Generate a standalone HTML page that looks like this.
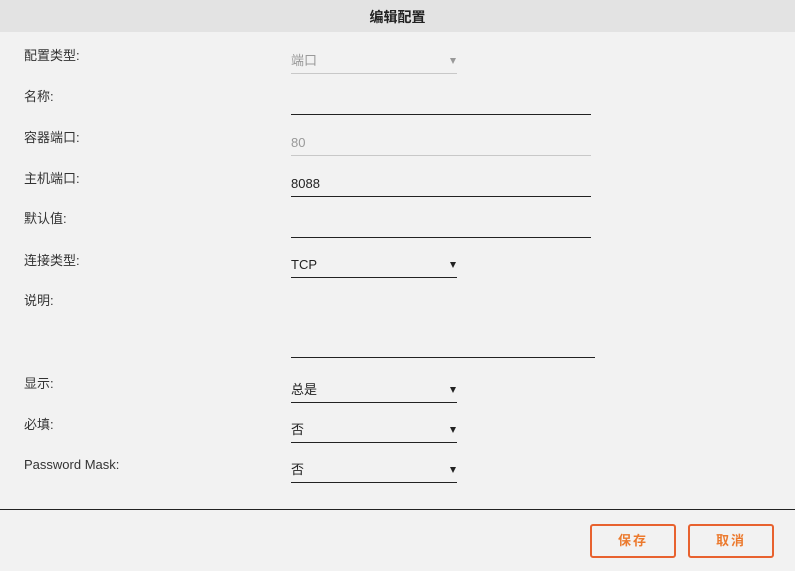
<!DOCTYPE html>
<html><head><meta charset="utf-8"><style>
*{margin:0;padding:0;box-sizing:border-box}
body{width:795px;height:571px;background:#f2f2f2;font-family:"Liberation Sans","Noto Sans CJK SC",sans-serif;position:relative;overflow:hidden;color:#333}
.hd{position:absolute;left:0;top:0;width:795px;height:32px;background:#e3e3e3;text-align:center;line-height:34px;font-size:14px;font-weight:bold;color:#222}
.l{position:absolute;left:24px;font-size:13px;color:#333;line-height:16px}
.f{position:absolute;left:291px;border-bottom:1px solid #222;height:20px;font-size:13px;line-height:14px;color:#222}
.g{border-bottom-color:#c8c8c8;color:#999}
.a{position:absolute;right:1px;top:4px;width:6px;height:6px}
.a path{fill:#222}
.g .a path{fill:#999}
.line{position:absolute;left:0;top:509px;width:795px;height:1px;background:#222}
.b{position:absolute;top:524px;width:86px;height:34px;border:2px solid #e8622f;border-radius:3px;color:#ec7a2e;font-size:13px;font-weight:bold;text-align:center;line-height:30px;letter-spacing:2px}
</style></head><body>
<div class="hd">编辑配置</div>
<div class="l" style="top:48px">配置类型:</div>
<div class="l" style="top:89px">名称:</div>
<div class="l" style="top:130px">容器端口:</div>
<div class="l" style="top:171px">主机端口:</div>
<div class="l" style="top:211px">默认值:</div>
<div class="l" style="top:253px">连接类型:</div>
<div class="l" style="top:293px">说明:</div>
<div class="l" style="top:376px">显示:</div>
<div class="l" style="top:417px">必填:</div>
<div class="l" style="top:457px">Password Mask:</div>

<div class="f g" style="top:54px;width:166px">端口<svg class="a" viewBox="0 0 6 6"><path d="M0 0H6L3 6Z"/></svg></div>
<div class="f" style="top:95px;width:300px"></div>
<div class="f g" style="top:136px;width:300px">80</div>
<div class="f" style="top:177px;width:300px">8088</div>
<div class="f" style="top:218px;width:300px"></div>
<div class="f" style="top:258px;width:166px">TCP<svg class="a" viewBox="0 0 6 6"><path d="M0 0H6L3 6Z"/></svg></div>
<div class="f" style="top:338px;width:304px"></div>
<div class="f" style="top:383px;width:166px">总是<svg class="a" viewBox="0 0 6 6"><path d="M0 0H6L3 6Z"/></svg></div>
<div class="f" style="top:423px;width:166px">否<svg class="a" viewBox="0 0 6 6"><path d="M0 0H6L3 6Z"/></svg></div>
<div class="f" style="top:463px;width:166px">否<svg class="a" viewBox="0 0 6 6"><path d="M0 0H6L3 6Z"/></svg></div>

<div class="line"></div>
<div class="b" style="left:590px">保存</div>
<div class="b" style="left:688px">取消</div>
</body></html>
